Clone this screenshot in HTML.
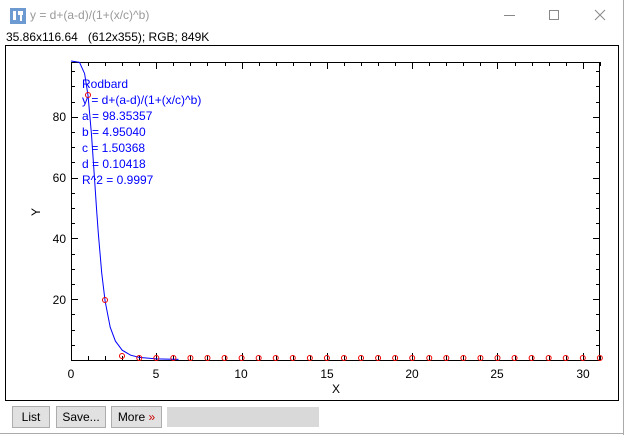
<!DOCTYPE html>
<html><head><style>
body{margin:0;width:624px;height:435px;background:#fff;position:relative;overflow:hidden;font-family:"Liberation Sans",Arial,sans-serif}
.t{position:absolute;white-space:nowrap}
.btn{position:absolute;top:406px;height:22px;background:#e1e1e1;border:1px solid #adadad;box-sizing:border-box;font-size:12px;line-height:20px;text-align:center;color:#000}
</style></head><body>
<div style="position:absolute;right:0;top:0;width:1px;height:435px;background:#aaa"></div>
<div style="position:absolute;left:0;bottom:1px;width:624px;height:1px;background:#aaa"></div>
<svg style="position:absolute;left:10px;top:8px" width="16" height="16"><rect x="0" y="0" width="16" height="16" fill="#6d9bd1"/><rect x="3" y="3" width="3" height="9" fill="#fff"/><rect x="8" y="3" width="5" height="4" fill="#fff"/><rect x="10" y="7" width="2" height="6" fill="#fff"/></svg>
<div class="t" style="left:30px;top:8px;font-size:12px;color:#999">y = d+(a-d)/(1+(x/c)^b)</div>
<svg style="position:absolute;left:440px;top:0" width="184" height="30"><line x1="504" y1="15.5" x2="515" y2="15.5" stroke="#888" transform="translate(-440 0)"/><rect x="109.5" y="10.5" width="9" height="9" fill="none" stroke="#888"/><path d="M155 10l10 10M165 10l-10 10" stroke="#888"/></svg>
<div class="t" style="left:6px;top:30px;font-size:12px;color:#000">35.86x116.64&nbsp;&nbsp;&nbsp;(612x355); RGB; 849K</div>
<svg style="position:absolute;left:0;top:0" width="624" height="435" font-family="Liberation Sans,Arial,sans-serif" font-size="12">
<rect x="5.5" y="45.5" width="613" height="355" fill="none" stroke="#000"/>
<rect x="71.5" y="62.5" width="528" height="298" fill="none" stroke="#000"/>
<path id="tk" stroke="#000" fill="none" d=""/>
<g fill="#000" text-anchor="end"><text x="66" y="304">20</text><text x="66" y="243">40</text><text x="66" y="182">60</text><text x="66" y="121">80</text></g>
<g fill="#000" text-anchor="middle"><text x="71" y="378">0</text><text x="156" y="378">5</text><text x="241" y="378">10</text><text x="327" y="378">15</text><text x="412" y="378">20</text><text x="497" y="378">25</text><text x="583" y="378">30</text><text x="336" y="393">X</text>
<text x="40" y="212" transform="rotate(-90 40 212)">Y</text></g>
<path d="M71 61 L79.5 62.3 L84.6 73.6 L88.1 96.1 L91.5 134.7 L94.9 184.3 L96.6 209.8 L98.3 233.2 L101.7 272.8 L105.1 301.1 L110.2 327.2 L115.4 341.1 L122.2 350.2 L130.7 355.2 L139.2 357.4 L156.3 358.9 L178.5 359.4" fill="none" stroke="#00f"/>
<g id="pts" fill="none" stroke="#e00"><circle cx="88" cy="95" r="2.5"/><circle cx="105" cy="300" r="2.5"/><circle cx="122" cy="356" r="2.5"/></g>
<g fill="#00f"><text x="82" y="88">Rodbard</text><text x="82" y="104">y = d+(a-d)/(1+(x/c)^b)</text><text x="82" y="120">a = 98.35357</text><text x="82" y="136">b = 4.95040</text><text x="82" y="152">c = 1.50368</text><text x="82" y="168">d = 0.10418</text><text x="82" y="184">R^2 = 0.9997</text></g>
</svg>
<div class="btn" style="left:12px;width:38px">List</div>
<div class="btn" style="left:56px;width:50px">Save...</div>
<div class="btn" style="left:111px;width:51px">More <span style="color:#c00">»</span></div>
<div style="position:absolute;left:167px;top:407px;width:152px;height:20px;background:#d9d9d9"></div>
<script>
var d="";
for(var i=0;i<=31;i++){var x=Math.round(71+i*17.06)+0.5;var L=(i%5==0)?7:4;d+="M"+x+" 360v-"+L+"M"+x+" 62v"+L;}
for(var j=0;j<=19;j++){var y=Math.round(360-j*5*3.04)+0.5;var L=(j%4==0)?7:4;d+="M71 "+y+"h"+L+"M600 "+y+"h-"+L;}
document.getElementById("tk").setAttribute("d",d);
var g=document.getElementById("pts"),s="";
for(var i=4;i<=31;i++){s+='<circle cx="'+(71+i*17.06)+'" cy="358" r="2.5"/>';}
g.innerHTML+=s;
</script>
</body></html>
